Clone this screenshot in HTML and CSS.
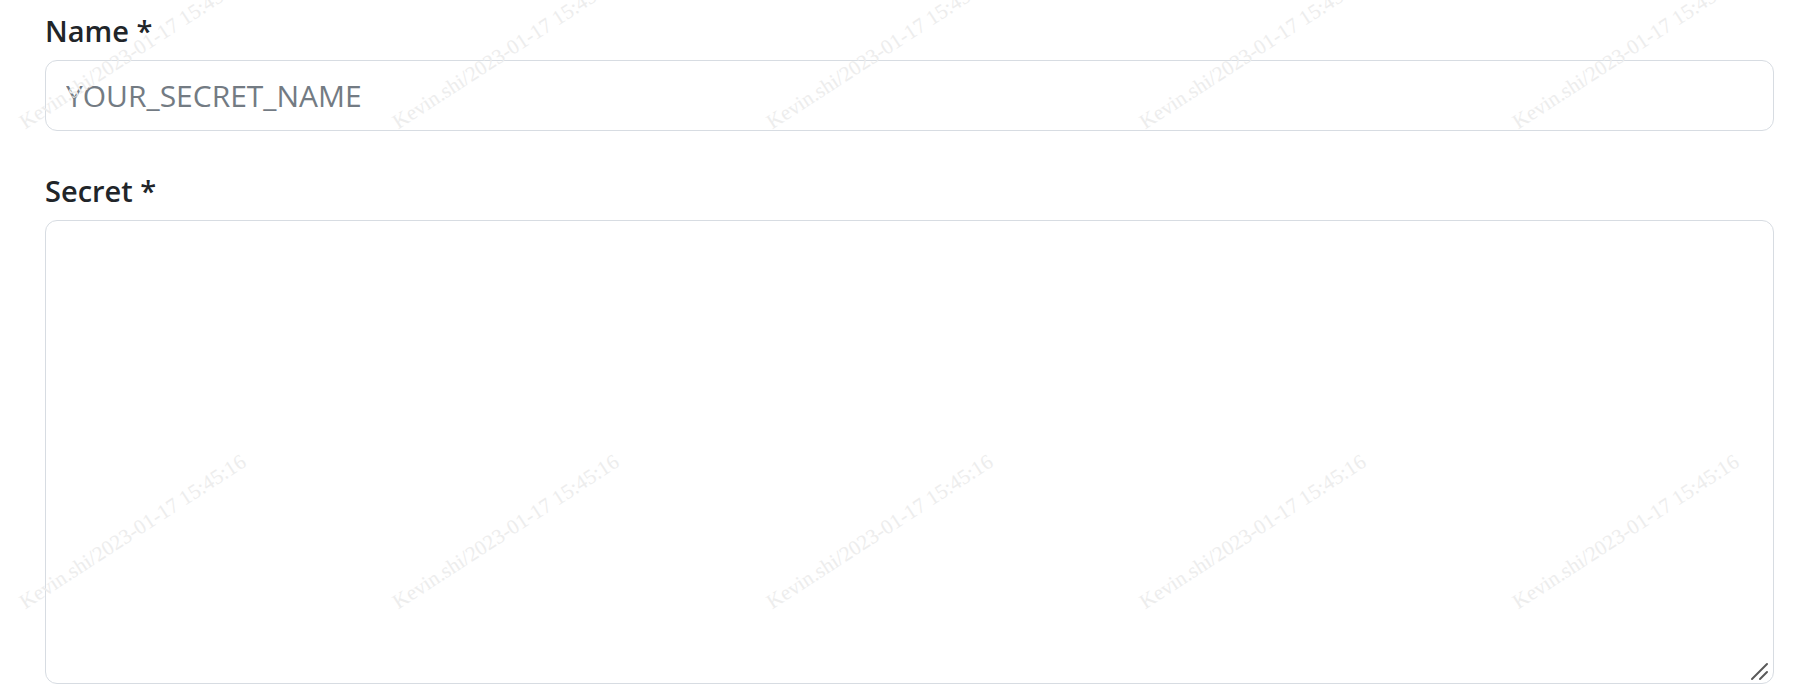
FILE: index.html
```html
<!DOCTYPE html>
<html>
<head>
<title>Secret</title>
<link rel="stylesheet" href="styles.css">
</head>
<body>
<div id="main">
<form class="secret-form">
<div class="field">
<label for="name">Name *</label>
<input type="text" id="name" class="control" placeholder="YOUR_SECRET_NAME">
</div>
<div class="field">
<label for="secret">Secret *</label>
<div class="area-wrap">
<textarea id="secret" class="control area"></textarea>
<svg class="grip" width="20" height="20" viewBox="0 0 20 20"><path d="M3 18 L18 3 M11 18 L18 11" stroke="#5a5a5a" stroke-width="2" stroke-linecap="round"/></svg>
</div>
</div>
</form>
<!-- watermark layer -->
<div class="watermark">
<span>Kevin.shi/2023-01-17 15:45:16</span>
<span>Kevin.shi/2023-01-17 15:45:16</span>
<span>Kevin.shi/2023-01-17 15:45:16</span>
<span>Kevin.shi/2023-01-17 15:45:16</span>
<span>Kevin.shi/2023-01-17 15:45:16</span>
<span>Kevin.shi/2023-01-17 15:45:16</span>
<span>Kevin.shi/2023-01-17 15:45:16</span>
<span>Kevin.shi/2023-01-17 15:45:16</span>
<span>Kevin.shi/2023-01-17 15:45:16</span>
<span>Kevin.shi/2023-01-17 15:45:16</span>
</div>
</div>
</body>
</html>
```
FILE: styles.css
```css
*{
margin: 0;
padding: 0;
box-sizing: border-box;
}
html,body{
height: 100%;
overflow: hidden;
background: #fff;
}
body{
font-family: "Open Sans", "Noto Sans", sans-serif;
color: #212529;
}
#main{
position: relative;
height: 100%;
overflow: hidden;
}
.secret-form{
padding: 8px 35px 0 45px;
display: flex;
flex-direction: column;
gap: 37px;
}
.field{
display: flex;
flex-direction: column;
}
.field label{
font-size: 29px;
font-weight: 600;
line-height: 45px;
margin-bottom: 7px;
}
.control{
font-family: inherit;
font-size: 30px;
color: #212529;
border: 1px solid #d7dce2;
border-radius: 12px;
padding: 0 20px;
background: #fff;
outline: none;
width: 100%;
display: block;
}
input.control{
height: 71px;
}
.control::placeholder{
color: #737b83;
}
.area-wrap{
position: relative;
}
.area{
height: 464px;
resize: none;
padding: 12px 20px;
}
.grip{
position: absolute;
right: 5px;
bottom: 3px;
}
.watermark{
position: absolute;
left: 27px;
top: 112px;
display: grid;
grid-template-columns: repeat(5, 373.25px);
grid-auto-rows: 480px;
pointer-events: none;
}
.watermark span{
display: block;
white-space: nowrap;
font-family: "Liberation Serif", serif;
font-size: 21px;
line-height: 20px;
height: 20px;
color: #ededed;
transform-origin: left bottom;
transform: rotate(-33deg);
}
```
